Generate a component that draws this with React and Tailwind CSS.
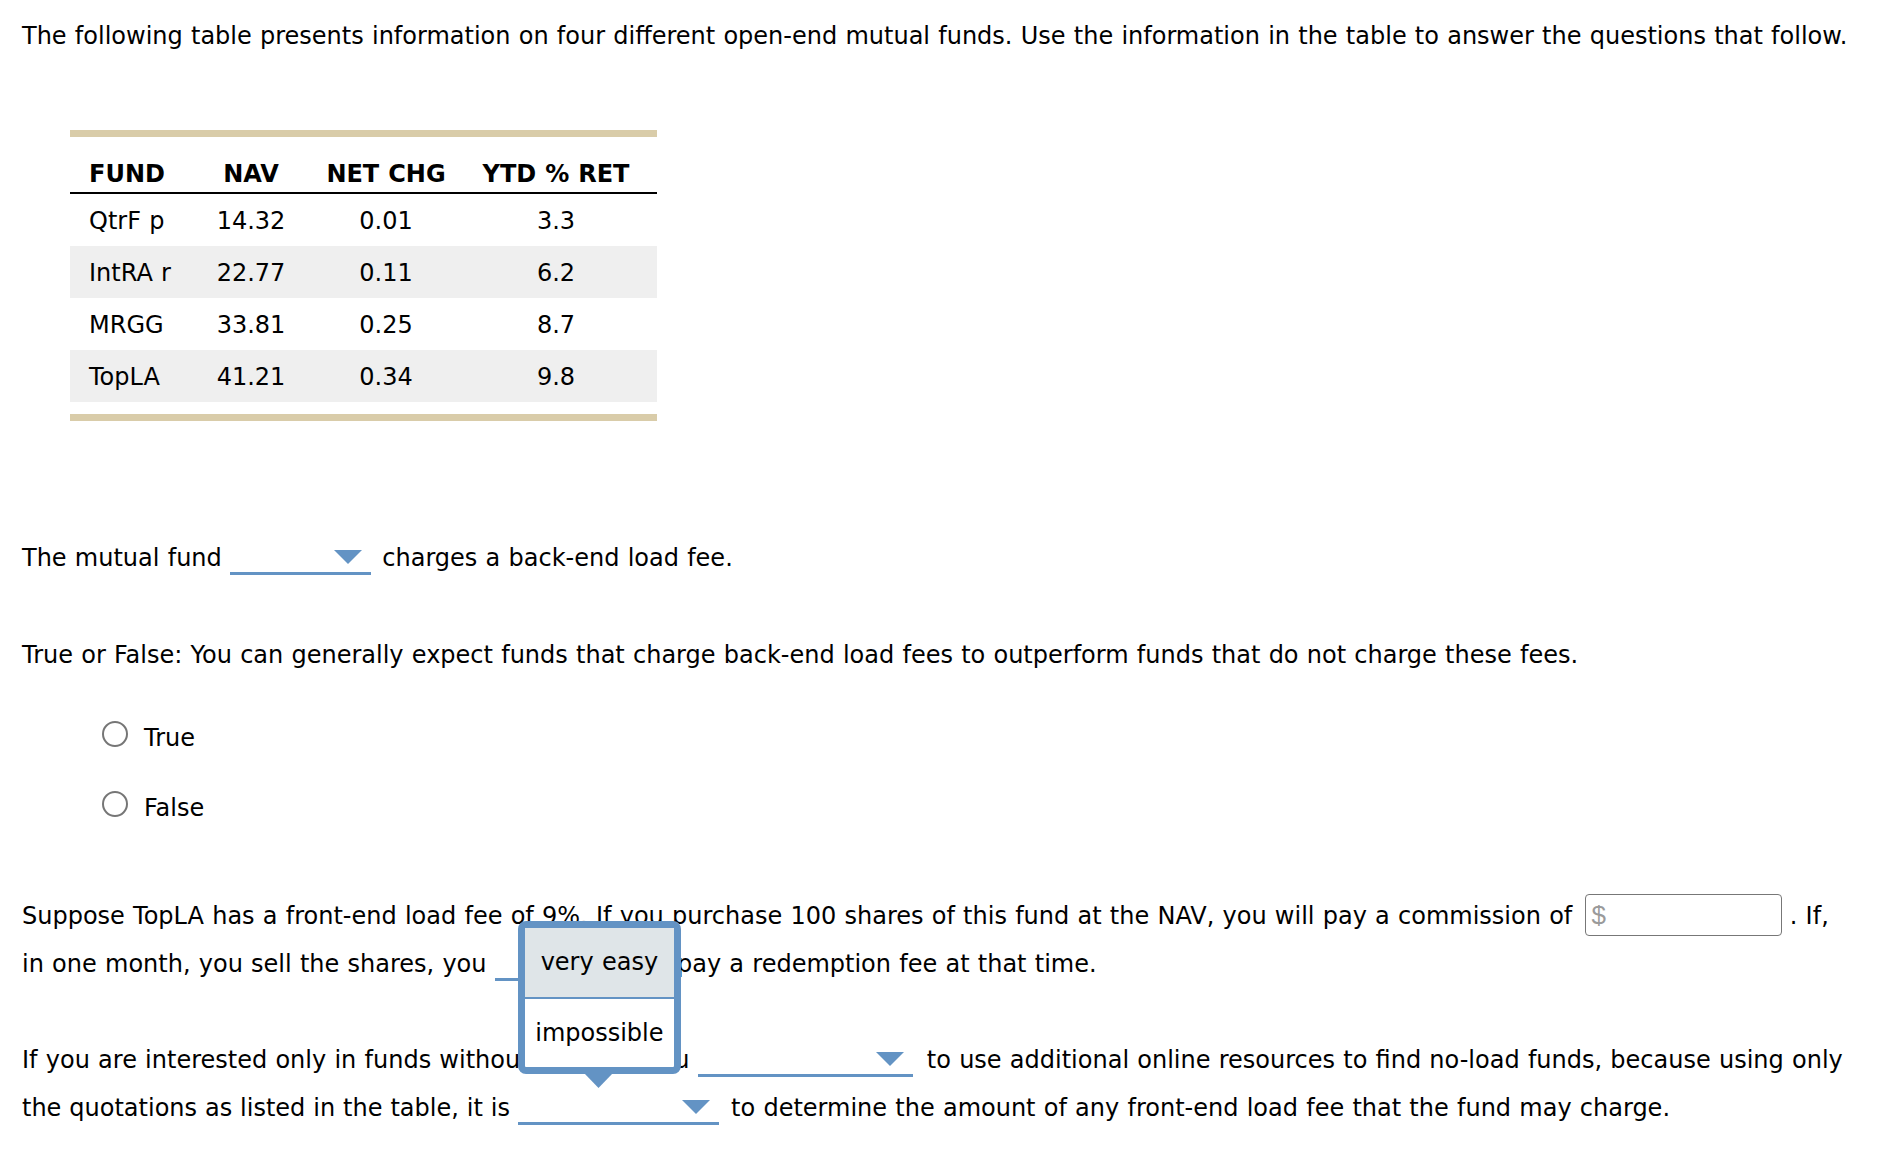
import React from "react";

function Tri({ className }) {
  return (
    <svg className={className} width="28" height="14" viewBox="0 0 28 14">
      <path d="M0 0H28L14 14Z" fill="#6393c4" />
    </svg>
  );
}

function Drop({ cls, children }) {
  return (
    <span className={cls}>
      <Tri className="absolute right-[9px] top-[5px]" />
      {children}
    </span>
  );
}

const rows = [
  ["QtrF p", "14.32", "0.01", "3.3", false],
  ["IntRA r", "22.77", "0.11", "6.2", true],
  ["MRGG", "33.81", "0.25", "8.7", false],
  ["TopLA", "41.21", "0.34", "9.8", true],
];

export default function App() {
  return (
    <div className="min-h-[1156px] bg-white text-black pl-[22px] pr-[14px] pt-[12px] font-['DejaVu_Sans',sans-serif] text-[24px] [word-spacing:0.6px]">
      <p className="leading-[48px] whitespace-nowrap">
        The following table presents information on four different open-end mutual funds. Use the information in the table to answer the questions that follow.
      </p>

      <div className="mt-[70px] ml-[48px] w-[587px]">
        <div className="h-[7px] bg-[#d9cca9]" />
        <div className="grid grid-cols-[115px_132px_138px_202px] h-[57px] pt-[17px] leading-[40px] font-bold border-b-2 border-black">
          <div className="pl-[19px]">FUND</div>
          <div className="text-center">NAV</div>
          <div className="text-center">NET CHG</div>
          <div className="text-center">YTD % RET</div>
        </div>
        {rows.map(([a, b, c, d, g]) => (
          <div
            key={a}
            className={
              g
                ? "grid grid-cols-[115px_132px_138px_202px] h-[52px] pt-[2px] leading-[50px] bg-[#efefef]"
                : "grid grid-cols-[115px_132px_138px_202px] h-[52px] pt-[2px] leading-[50px]"
            }
          >
            <div className="pl-[19px]">{a}</div>
            <div className="text-center">{b}</div>
            <div className="text-center">{c}</div>
            <div className="text-center">{d}</div>
          </div>
        ))}
        <div className="mt-[12px] h-[7px] bg-[#d9cca9]" />
      </div>

      <p className="mt-[113px] leading-[48px]">
        The mutual fund{" "}
        <Drop cls="relative inline-block h-[30px] w-[141px] border-b-[3px] border-[#6393c4] align-[-9px] mr-[3px]" />{" "}
        charges a back-end load fee.
      </p>

      <p className="mt-[49px] leading-[48px]">
        True or False: You can generally expect funds that charge back-end load fees to outperform funds that do not charge these fees.
      </p>

      <div className="mt-[35px] ml-[80px] flex flex-col gap-[22px]">
        {["True", "False"].map((t) => (
          <label key={t} className="flex items-start gap-[16px] leading-[48px]">
            <span className="mt-[7px] w-[26px] h-[26px] rounded-full border-2 border-[#767676] bg-white" />
            <span>{t}</span>
          </label>
        ))}
      </div>

      <p className="mt-[60px] leading-[48px]">
        Suppose TopLA has a front-end load fee of 9%. If you purchase 100 shares of this fund at the NAV, you will pay a commission of{" "}
        <span className="ml-[4px] inline-flex items-center h-[42px] w-[197px] border-[1.5px] border-[#777777] rounded-[4px] pl-[6px] align-baseline">
          <span className="leading-none text-[26px] text-[#9a9a9a] font-['Liberation_Sans',sans-serif]">$</span>
        </span>{" "}
        . If,
        <br />
        in one month, you sell the shares, you{" "}
        <Drop cls="relative inline-block h-[30px] w-[170px] border-b-[3px] border-[#6393c4] align-[-9px] mr-[4px]" />{" "}
        pay a redemption fee at that time.
      </p>

      <p className="mt-[48px] leading-[48px]">
        If you are interested only in funds without loads so you{" "}
        <Drop cls="relative inline-block h-[30px] w-[215px] border-b-[3px] border-[#6393c4] align-[-9px] mr-[6px]" />{" "}
        to use additional online resources to find no-load funds, because using only
        <br />
        <span className="[word-spacing:0.3px]">the quotations as listed in the table, it is </span>
        <Drop cls="relative inline-block h-[30px] w-[201px] border-b-[3px] border-[#6393c4] align-[-9px] mr-[4px]">
          <span className="absolute left-0 bottom-[48px] w-[163px] h-[153px] border-[7px] border-[#6393c4] rounded-[8px] bg-white flex flex-col">
            <span className="h-[69px] leading-[69px] bg-[#dfe5e8] text-center">very easy</span>
            <span className="h-[2px] bg-[#6393c4]" />
            <span className="h-[68px] leading-[68px] text-center">impossible</span>
            <svg className="absolute left-[59px] top-[145px]" width="29" height="15" viewBox="0 0 29 15">
              <path d="M0 0H29L14.5 15Z" fill="#6393c4" />
            </svg>
          </span>
        </Drop>{" "}
        to determine the amount of any front-end load fee that the fund may charge.
      </p>
    </div>
  );
}
